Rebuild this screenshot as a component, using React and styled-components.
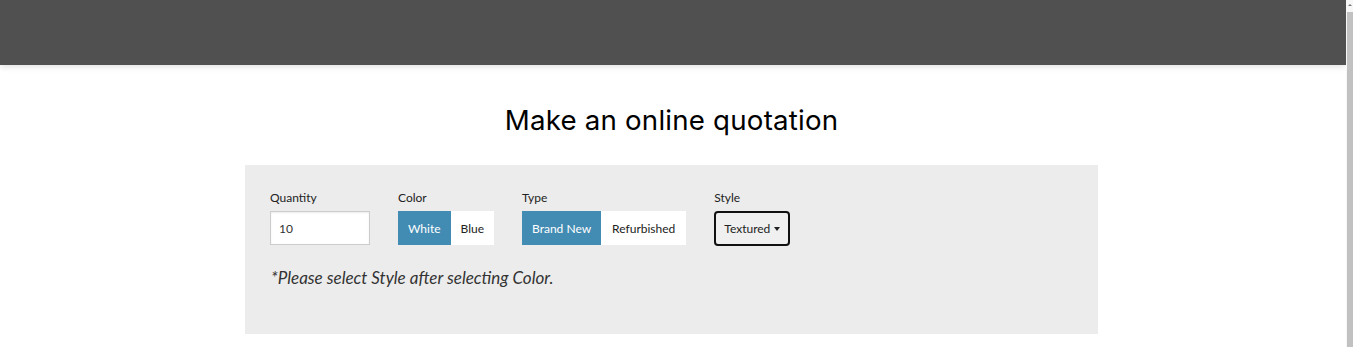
import React, { useState } from "react";
import styled, { createGlobalStyle } from "styled-components";

const Global = createGlobalStyle`
  html, body { scrollbar-width: none; }
  html::-webkit-scrollbar { display: none; }
  body {
    margin: 0;
    background: #fff;
    font-family: Lato, "Liberation Sans", sans-serif;
    color: #222;
  }
`;

const Page = styled.div`
  width: calc(100% - 7px);
`;

const ScrollTrack = styled.div`
  position: fixed;
  top: 0;
  right: 0;
  width: 7px;
  height: 100vh;
  background: #f7f7f7;
  display: flex;
  flex-direction: column;
  align-items: flex-end;
`;

const ScrollArrow = styled.div`
  margin: 4px 1px 0 0;
  width: 0;
  height: 0;
  border-left: 2px solid transparent;
  border-right: 2px solid transparent;
  border-bottom: 2px solid #777;
`;

const ScrollThumb = styled.div`
  margin-top: 6px;
  width: 6px;
  flex: 1;
  background: #c1c1c1;
`;

const Header = styled.header`
  height: 65px;
  background: #505050;
  box-shadow: 0 2px 6px rgba(0, 0, 0, 0.12);
`;

const Main = styled.main`
  padding: 38px 3px 40px 0;
  display: flex;
  flex-direction: column;
  align-items: center;
`;

const Title = styled.h1`
  margin: 0 0 27px;
  font-family: Inter, "Open Sans", sans-serif;
  font-weight: 400;
  font-size: 27.7px;
  line-height: 35px;
  color: #000;
  letter-spacing: 0.2px;
`;

const Panel = styled.section`
  width: 853px;
  box-sizing: border-box;
  background: #ececec;
  padding: 26px 25px 46px;
`;

const Row = styled.div`
  display: flex;
  gap: 28px;
  align-items: flex-start;
`;

const Field = styled.div`
  display: flex;
  flex-direction: column;
`;

const Label = styled.label`
  font-size: 12px;
  line-height: 14px;
  margin-bottom: 6px;
  color: #222;
`;

const Input = styled.input`
  width: 100px;
  height: 34px;
  box-sizing: border-box;
  border: 1px solid #ccc;
  box-shadow: inset 0 1px 2px rgba(0, 0, 0, 0.08);
  padding: 0 8px;
  font-family: Lato, sans-serif;
  font-size: 12px;
  color: #333;
  background: #fff;
  outline: none;
`;

const Group = styled.div`
  display: flex;
`;

const Toggle = styled.button`
  height: 34px;
  border: none;
  margin: 0;
  padding: 0 ${(p) => p.$pad}px;
  font-family: Lato, sans-serif;
  font-size: 12px;
  cursor: pointer;
  background: ${(p) => (p.$active ? "#428bb3" : "#fff")};
  color: ${(p) => (p.$active ? "#fff" : "#222")};
`;

const Dropdown = styled.button`
  height: 35px;
  box-sizing: border-box;
  border: 2px solid #111;
  border-radius: 4px;
  background: #f0f0f0;
  padding: 0 8px;
  font-family: Lato, sans-serif;
  font-size: 12px;
  color: #222;
  display: flex;
  align-items: center;
  gap: 4px;
`;

const Caret = styled.span`
  width: 0;
  height: 0;
  border-left: 3.5px solid transparent;
  border-right: 3.5px solid transparent;
  border-top: 4px solid #222;
`;

const Note = styled.p`
  margin: 22px 0 0 1px;
  font-style: italic;
  font-size: 17px;
  line-height: 20px;
  color: #333;
`;

export default function App() {
  const [color, setColor] = useState("White");
  const [type, setType] = useState("Brand New");
  return (
    <>
      <Global />
      <Page>
        <Header />
        <Main>
          <Title>Make an online quotation</Title>
          <Panel>
            <Row>
              <Field>
                <Label>Quantity</Label>
                <Input defaultValue="10" />
              </Field>
              <Field>
                <Label>Color</Label>
                <Group>
                  <Toggle $pad={10} $active={color === "White"} onClick={() => setColor("White")}>White</Toggle>
                  <Toggle $pad={10} $active={color === "Blue"} onClick={() => setColor("Blue")}>Blue</Toggle>
                </Group>
              </Field>
              <Field>
                <Label>Type</Label>
                <Group>
                  <Toggle $pad={10} $active={type === "Brand New"} onClick={() => setType("Brand New")}>Brand New</Toggle>
                  <Toggle $pad={11} $active={type === "Refurbished"} onClick={() => setType("Refurbished")}>Refurbished</Toggle>
                </Group>
              </Field>
              <Field>
                <Label>Style</Label>
                <Dropdown>
                  Textured <Caret />
                </Dropdown>
              </Field>
            </Row>
            <Note>*Please select Style after selecting Color.</Note>
          </Panel>
        </Main>
      </Page>
      <ScrollTrack>
        <ScrollArrow />
        <ScrollThumb />
      </ScrollTrack>
    </>
  );
}
